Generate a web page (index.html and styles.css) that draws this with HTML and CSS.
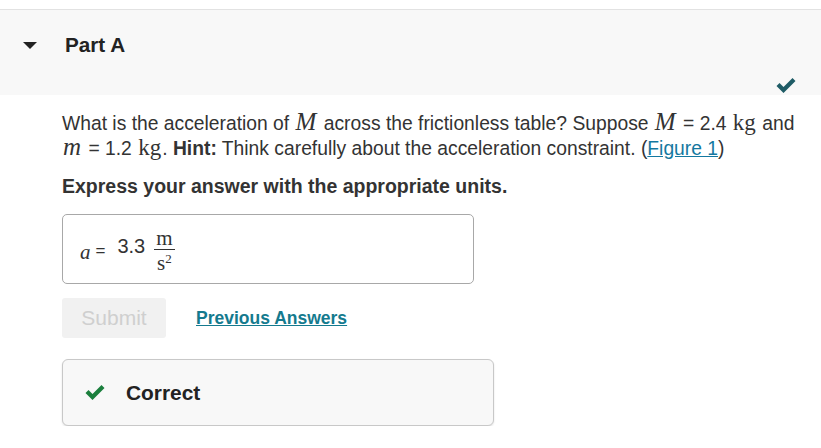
FILE: index.html
```html
<!DOCTYPE html>
<html>
<head>
<meta charset="utf-8">
<link rel="stylesheet" href="styles.css">
</head>
<body>
<div class="part">
  <div class="part-header">
    <div class="part-title-row">
      <span class="caret"></span>
      <h2 class="part-title">Part A</h2>
    </div>
    <div class="status-row">
      <svg class="status-check" width="22" height="16" viewBox="0 0 22 16"><path d="M1.5 8 L4.5 5 L8.5 9 L17.5 0 L20.5 3 L8.5 15 Z" fill="#1f5c66"/></svg>
    </div>
  </div>
  <div class="part-body">
    <p class="question">What is the acceleration of <span class="mi">M</span> across the frictionless table? Suppose <span class="mi">M</span> = 2.4 <span class="mn">kg</span> and <span class="nowrap"><span class="mi">m</span> = 1.2</span> <span class="mn">kg</span>. <b>Hint:</b> Think carefully about the acceleration constraint. (<a class="fig-link" href="#">Figure 1</a>)</p>
    <p class="instructions">Express your answer with the appropriate units.</p>
    <div class="answer-box">
      <span class="mi var">a</span><span class="eq">=</span><span class="val">3.3</span>
      <span class="frac"><span class="num">m</span><span class="den">s<sup>2</sup></span></span>
    </div>
    <div class="actions">
      <button class="submit-btn" disabled>Submit</button>
      <a class="prev-link" href="#">Previous Answers</a>
    </div>
    <div class="feedback">
      <svg class="fb-check" width="22" height="16" viewBox="0 0 22 16"><path d="M1.5 8 L4.5 5 L8.5 9 L17.5 0 L20.5 3 L8.5 15 Z" fill="#1b7f3d"/></svg>
      <span class="fb-text">Correct</span>
    </div>
  </div>
</div>
</body>
</html>
```
FILE: styles.css
```css
html, body {
  margin: 0;
  padding: 0;
  background: #fff;
}
body {
  padding-top: 9px;
  font-family: "Liberation Sans", Arial, sans-serif;
  color: #333;
}
.part {
  border-top: 1px solid #e2e2e2;
}
.part-header {
  background: #f8f8f8;
  height: 85px;
  display: flex;
  flex-direction: column;
}
.part-title-row {
  display: flex;
  align-items: center;
  padding-top: 24px;
  height: 22px;
}
.caret {
  width: 0;
  height: 0;
  margin-left: 23px;
  border-left: 7px solid transparent;
  border-right: 7px solid transparent;
  border-top: 7px solid #222;
}
.part-title {
  margin: 0 0 0 28px;
  font-size: 20.7px;
  line-height: 22px;
  font-weight: bold;
  color: #222;
}
.status-row {
  display: flex;
  justify-content: flex-end;
  padding-right: 24px;
  margin-top: 22px;
}
.status-check {
  display: block;
}
.part-body {
  padding: 0 10px 0 62px;
}
.question {
  margin: 16px 0 0;
  font-size: 19.3px;
  line-height: 25px;
}
.nowrap {
  white-space: nowrap;
}
.mi {
  font-family: "Liberation Serif", "DejaVu Serif", serif;
  font-style: italic;
  font-size: 25px;
  line-height: 20px;
  margin: 0 2px 0 1px;
}
.mn {
  font-family: "Liberation Serif", "DejaVu Serif", serif;
  font-size: 23px;
  line-height: 20px;
  margin: 0 1px;
}
.fig-link {
  color: #1478a0;
  text-decoration: underline;
}
.instructions {
  margin: 14px 0 0;
  font-size: 19.5px;
  line-height: 22px;
  font-weight: bold;
}
.answer-box {
  margin-top: 17px;
  box-sizing: border-box;
  width: 412px;
  height: 70px;
  border: 1px solid #a8a8a8;
  border-radius: 5px;
  display: flex;
  align-items: center;
  padding-left: 17px;
  font-size: 17px;
}
.answer-box .var {
  font-size: 21px;
  margin: 6px 0 0;
}
.eq {
  margin: 4px 0 0 5px;
}
.val {
  margin-left: 12px;
  font-size: 20px;
  margin-top: -6px;
}
.frac {
  display: inline-flex;
  flex-direction: column;
  align-items: center;
  margin-left: 9px;
  font-family: "Liberation Serif", "DejaVu Serif", serif;
  font-size: 21px;
  line-height: 16px;
  margin-top: 2px;
}
.num {
  padding: 0 2px 3px;
  border-bottom: 1px solid #333;
}
.den {
  padding-top: 5px;
}
.den sup {
  font-size: 13px;
  line-height: 0;
  vertical-align: 7px;
}
.actions {
  margin-top: 14px;
  display: flex;
  align-items: center;
}
.submit-btn {
  width: 104px;
  height: 40px;
  border: none;
  border-radius: 3px;
  background: #f1f1f1;
  color: #cfcfcf;
  font-family: "Liberation Sans", Arial, sans-serif;
  font-size: 21px;
  padding: 0;
}
.prev-link {
  margin-left: 30px;
  color: #147a8e;
  font-weight: bold;
  font-size: 17.5px;
  text-decoration: underline;
}
.feedback {
  margin-top: 21px;
  box-sizing: border-box;
  width: 432px;
  height: 67px;
  background: #f8f8f8;
  border: 1px solid #c8c8c8;
  border-radius: 6px;
  box-shadow: 0 1px 2px rgba(0,0,0,0.12);
  display: flex;
  align-items: center;
  padding-left: 21px;
}
.fb-check {
  display: block;
}
.fb-text {
  margin-left: 20px;
  font-size: 20.9px;
  font-weight: bold;
  color: #222;
}
```
